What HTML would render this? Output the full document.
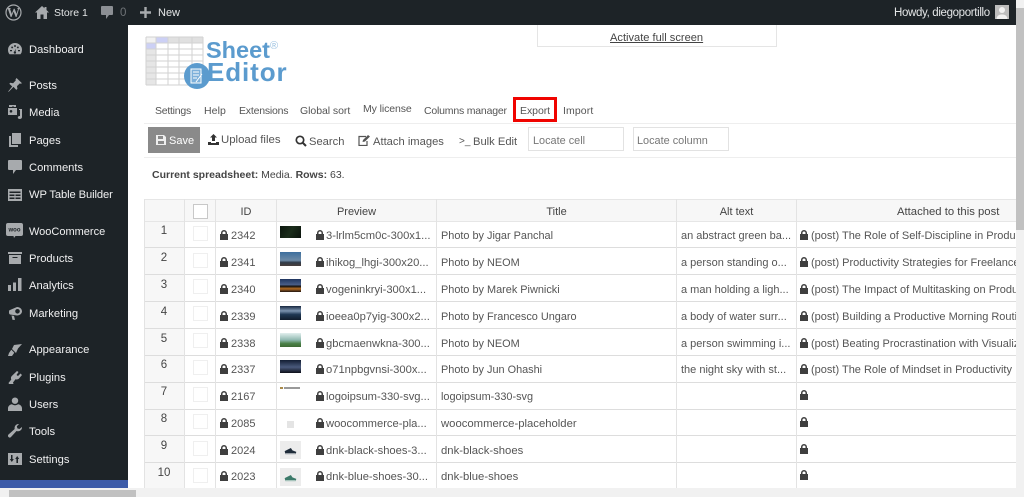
<!DOCTYPE html>
<html lang="en">
<head>
<meta charset="utf-8">
<title>Sheet Editor</title>
<style>
html,body{margin:0;padding:0;width:1024px;height:497px;overflow:hidden;background:#fff;font-family:"Liberation Sans",sans-serif;}
div,span,a,svg{position:absolute;}
.t{white-space:nowrap;line-height:14px;font-size:11px;color:#555;}
.sb{color:#f0f0f1;font-size:11.2px;left:29px;white-space:nowrap;line-height:14px;margin-top:1px;}
.si{left:8px;width:14px;height:14px;fill:#a7aaad;}
.m{font-size:10.5px;letter-spacing:-.15px;color:#555;white-space:nowrap;line-height:14px;top:104px;}
.tb{font-size:11.2px;color:#555;white-space:nowrap;line-height:14px;top:135px;}
.h{background:#e6e6e6;}
.v{background:#e3e3e3;top:199px;width:1px;height:289px;}
.th{font-size:11px;color:#444;text-align:center;line-height:14px;top:205px;}
.n{left:144px;width:40px;text-align:center;font-size:11.5px;color:#444;line-height:14px;margin-top:1px;}
.cb{left:193px;width:13px;height:13px;border:1px solid #efefef;background:#fff;}
.id{left:231px;font-size:11px;color:#555;line-height:14px;margin-top:1px;}
.p{left:326px;font-size:11.2px;color:#555;line-height:14px;white-space:nowrap;margin-top:1px;}
.ti{left:441px;font-size:10.9px;color:#555;line-height:14px;white-space:nowrap;margin-top:1px;}
.al{left:681px;font-size:11px;color:#555;line-height:14px;white-space:nowrap;margin-top:1px;}
.po{left:811px;width:205px;overflow:hidden;font-size:11px;color:#555;line-height:14px;white-space:nowrap;margin-top:1px;}
.l{width:8px;height:10px;fill:#3f3f3f;}
.th2{left:280px;width:21px;height:12px;}
</style>
</head>
<body>
<!-- admin bar -->
<div style="left:0;top:0;width:1016px;height:25px;background:#1d2327"></div>
<svg style="left:5px;top:4px;width:17px;height:17px" viewBox="0 0 20 20"><circle cx="10" cy="10" r="8.800" fill="none" stroke="#a7aaad" stroke-width="1.400"/><text x="10" y="15.500" font-family="Liberation Serif,serif" font-size="15.500" font-weight="bold" fill="#a7aaad" text-anchor="middle">W</text></svg>
<svg style="left:35px;top:6px;width:14px;height:13px" viewBox="0 0 14 13"><path d="M7 0L0 6.500h2V13h3.500V8.500h3V13H12V6.500h2L11.500 4V1h-2v1.200z" fill="#a7aaad"/></svg>
<span class="t" style="left:54px;top:6px;color:#e4e6e7;font-size:10.5px">Store 1</span>
<svg style="left:101px;top:6px;width:12px;height:14px" viewBox="0 0 12 14"><path d="M1 0h10a1 1 0 0 1 1 1v7a1 1 0 0 1-1 1H8l-3 4V9H1a1 1 0 0 1-1-1V1a1 1 0 0 1 1-1z" fill="#8c8f94"/></svg>
<span class="t" style="left:120px;top:6px;color:#6f7377;font-size:11.500px">0</span>
<svg style="left:140px;top:7px;width:11px;height:11px" viewBox="0 0 11 11"><path d="M4.300 0h2.400v4.300H11v2.400H6.700V11H4.300V6.700H0V4.300h4.300z" fill="#a7aaad"/></svg>
<span class="t" style="left:158px;top:6px;color:#e4e6e7;font-size:11px">New</span>
<span class="t" style="left:894px;top:6px;color:#e4e6e7;font-size:11.500px;letter-spacing:-.03em">Howdy, diegoportillo</span>
<div style="left:995px;top:5px;width:14px;height:14px;background:#bdbdbd"></div>
<svg style="left:995px;top:5px;width:14px;height:14px" viewBox="0 0 14 14"><circle cx="7" cy="5" r="3" fill="#f2f2f2"/><path d="M1.500 14c.5-3.500 2.500-4.500 5.500-4.500s5 1 5.500 4.500z" fill="#f2f2f2"/></svg>

<!-- sidebar -->
<div style="left:0;top:25px;width:128px;height:455px;background:#1d2327"></div>
<div style="left:0;top:480px;width:128px;height:8px;background:#3c5ba8"></div>

<svg class="si" style="top:42px" viewBox="0 0 14 14"><path d="M7 1a7 7 0 0 0-7 7c0 1.700.6 3.200 1.500 4.300h11A7 7 0 0 0 14 8a7 7 0 0 0-7-7zM6.300 3h1.400v2H6.300zM3 5l1.400-.6.800 1.500-1.300.6zm8 0l-.9 1.500-1.300-.6.800-1.500zM7.800 6.500L7.500 9.500a1.200 1.200 0 1 1-1-.1zM2 8h2v1.300H2zm8 0h2v1.300h-2z"/></svg>
<span class="sb" style="top:42px">Dashboard</span>
<svg class="si" style="top:78px" viewBox="0 0 14 14"><path d="M8.500 0l5.500 5.200-1.400.6-.8-.4-2.800 2.700.4 2.800-1.100 1-2.800-3L1 13.500l-1 .5.600-1L4.200 8.500 1.300 5.800l1-1 2.800.4L7.800 2.400l-.3-.9z"/></svg>
<span class="sb" style="top:78px">Posts</span>
<svg class="si" style="top:105px" viewBox="0 0 14 14"><path d="M1 0h7v2h-2L5 1 4 2H1zM0 3h9v7H0zm3 2a1.300 1.300 0 1 0 0 2.600A1.300 1.300 0 0 0 3 5zm8-1h3v8c0 1.200-1 2-2.200 2s-2-.6-2-1.500.8-1.500 2.200-1.500V5h-1z"/></svg>
<span class="sb" style="top:105px">Media</span>
<svg class="si" style="top:133px" viewBox="0 0 14 14"><path d="M4 0h9v11H4zM1 3h2v9h7v2H1z"/></svg>
<span class="sb" style="top:133px">Pages</span>
<svg class="si" style="top:160px" viewBox="0 0 14 14"><path d="M1 0h12a1 1 0 0 1 1 1v8a1 1 0 0 1-1 1H8l-3 4v-4H1a1 1 0 0 1-1-1V1a1 1 0 0 1 1-1z"/></svg>
<span class="sb" style="top:160px">Comments</span>
<svg class="si" style="top:188px" viewBox="0 0 14 14"><path d="M0 1h14v12H0zm1.500 2.500v1.500h11V3.500zm0 3V8h5V6.500zm6 0V8h5V6.500zm-6 3V11h5V9.500zm6 0V11h5V9.500z" fill-rule="evenodd"/></svg>
<span class="sb" style="top:187px;letter-spacing:-.1px">WP Table Builder</span>
<svg style="left:6px;top:222px;width:17px;height:17px" viewBox="0 0 17 17"><path d="M2 1h13a2 2 0 0 1 2 2v9a2 2 0 0 1-2 2H9.500L8 16l-.5-2H2a2 2 0 0 1-2-2V3a2 2 0 0 1 2-2z" fill="#a7aaad"/><text x="8.500" y="9.500" font-family="Liberation Sans,sans-serif" font-size="6" font-weight="bold" fill="#1d2327" text-anchor="middle">woo</text></svg>
<span class="sb" style="top:224px;font-size:11px">WooCommerce</span>
<svg class="si" style="top:251px" viewBox="0 0 14 14"><path d="M0 1h14v2H0zm1 3h12v9H1zm3.500 2v1h5V6z" fill-rule="evenodd"/></svg>
<span class="sb" style="top:251px">Products</span>
<svg class="si" style="top:278px" viewBox="0 0 14 14"><path d="M0 7h3v6H0zM5 4.500h3V13H5zM10 0h3.500v13H10z"/></svg>
<span class="sb" style="top:278px">Analytics</span>
<svg class="si" style="top:306px" viewBox="0 0 14 14"><path d="M9 1c2.800 0 5 2 5 4.300S11.800 9.500 9 9.500L2 8.500A2 2 0 0 1 1 7V5.500c0-.8.400-1.400 1-1.500zM9.500 3a2.300 2.300 0 1 0 0 4.600 2.300 2.300 0 0 0 0-4.600zM3.500 9.500l2.500.4 1 4H4.500z"/></svg>
<span class="sb" style="top:306px">Marketing</span>
<svg class="si" style="top:342px" viewBox="0 0 14 14"><path d="M6 3l8-1-4 4.500L8 11 4 7zM3.300 7.700l3 3L4 14H0l1-3z"/></svg>
<span class="sb" style="top:342px">Appearance</span>
<svg class="si" style="top:370px" viewBox="0 0 14 14"><path d="M9 1l1.500 1L8.500 5l1.500 1 2.500-2.500L14 5l-3 3.500c-1 1-2.500 1.200-3.500.8L5 12.500 5.500 14H1l-.5-1 2.800-3.500c-.6-1-.5-2.500.5-3.500z"/></svg>
<span class="sb" style="top:370px">Plugins</span>
<svg class="si" style="top:397px" viewBox="0 0 14 14"><circle cx="7" cy="3.700" r="3.200"/><path d="M0 14v-2.500c0-2.500 2-4 4-4.200C5 8 6 8.300 7 8.300s2-.3 3-1c2 .2 4 1.700 4 4.200V14z"/></svg>
<span class="sb" style="top:397px">Users</span>
<svg class="si" style="top:424px" viewBox="0 0 14 14"><path d="M14 3a4 4 0 0 1-5.500 4L3 13a1.700 1.700 0 0 1-2.500-2.500L6.700 5A4 4 0 0 1 11 0L8.800 2.400l.6 2 2 .6z"/></svg>
<span class="sb" style="top:424px">Tools</span>
<svg class="si" style="top:452px" viewBox="0 0 14 14"><path d="M0 1h14v12H0zm3 2v4H1.800l2 3 2-3H4.500V3zm7 8V7h1.200l-2-3-2 3h1.200v4z" fill-rule="evenodd"/></svg>
<span class="sb" style="top:452px">Settings</span>

<!-- logo -->
<svg style="left:145px;top:35px;width:145px;height:65px" viewBox="0 0 145 65">
<rect x="1" y="2" width="57" height="48" fill="#fff"/>
<rect x="1" y="2" width="10" height="48" fill="#e6e6e6"/>
<rect x="1" y="2" width="57" height="6" fill="#e0e0e0"/>
<rect x="1" y="2" width="10" height="6" fill="#f2f2f2"/>
<rect x="11" y="2" width="12" height="6" fill="#ccd0f5"/>
<rect x="1" y="8" width="10" height="6" fill="#ccd0f5"/>
<path d="M1 2v48M11 2v48M23 2v48M34 2v48M47 2v48M58 2v48M1 2h57M1 8h57M1 14h57M1 20h57M1 26h57M1 32h57M1 38h57M1 44h57M1 50h57" stroke="#d2d2d2" stroke-width="1" fill="none"/>
<text x="61" y="23" font-family="Liberation Sans,sans-serif" font-size="23.500" font-weight="bold" fill="#5b9bce">Sheet</text>
<text x="62" y="46" font-family="Liberation Sans,sans-serif" font-size="26" font-weight="bold" letter-spacing=".9" fill="#5b9bce">Editor</text>
<text x="125" y="14" font-family="Liberation Sans,sans-serif" font-size="11" fill="#9cc2e2">®</text>
<circle cx="52" cy="41" r="13" fill="#5b9bce"/>
<path d="M46 34h10v14H46z" fill="#7db0da" stroke="#fff" stroke-width="1"/>
<path d="M48 37h6M48 40h6M48 43h4M51 47l6-8" stroke="#fff" stroke-width="1" fill="none"/>
</svg>

<!-- full screen box -->
<div style="left:537px;top:25px;width:238px;height:21px;border:1px solid #e5e5e5;border-top:0"></div>
<a class="t" style="left:610px;top:31px;color:#444;text-decoration:underline;font-size:11.100px">Activate full screen</a>

<!-- menu -->
<span class="m" style="left:155px;letter-spacing:-.25px">Settings</span>
<span class="m" style="left:204px;letter-spacing:.1px">Help</span>
<span class="m" style="left:239px;letter-spacing:-.2px">Extensions</span>
<span class="m" style="left:300px;letter-spacing:-.05px">Global sort</span>
<span class="m" style="left:363px;top:102px;letter-spacing:-.1px">My license</span>
<span class="m" style="left:424px;letter-spacing:-.2px">Columns manager</span>
<span class="m" style="left:520px;letter-spacing:-.05px">Export</span>
<span class="m" style="left:563px;letter-spacing:.1px">Import</span>
<div style="left:513px;top:97px;width:38px;height:19px;border:3px solid #f00400"></div>
<div style="left:144px;top:123px;width:872px;height:1px;background:#eee"></div>

<!-- toolbar -->
<div style="left:148px;top:127px;width:52px;height:26px;background:#8a8a8a"></div>
<svg style="left:156px;top:135px;width:10px;height:10px" viewBox="0 0 10 10"><path d="M0 0h8l2 2v8H0zm2 1v3h5V1zm0 5v3h6V6z" fill="#eee" fill-rule="evenodd"/></svg>
<span class="tb" style="left:169px;color:#fff;top:134px;font-size:11px">Save</span>
<svg style="left:208px;top:134px;width:11px;height:11px" viewBox="0 0 11 11"><path d="M5.500 0L9 3.500H7V7H4V3.500H2zM0 8h3v1h5V8h3v3H0z" fill="#333"/></svg>
<span class="tb" style="left:221px;top:133px;font-size:11.400px">Upload files</span>
<svg style="left:295px;top:135px;width:12px;height:12px" viewBox="0 0 12 12"><circle cx="5" cy="5" r="3.700" fill="none" stroke="#333" stroke-width="1.700"/><path d="M8 8l3 3" stroke="#333" stroke-width="2"/></svg>
<span class="tb" style="left:309px">Search</span>
<svg style="left:358px;top:135px;width:12px;height:11px" viewBox="0 0 12 11"><path d="M8 1.500H1v9h8V6" fill="none" stroke="#555" stroke-width="1.200"/><path d="M4.500 7l.5-2L10 0l2 1.500-5 5z" fill="#555"/></svg>
<span class="tb" style="left:373px">Attach images</span>
<span class="tb" style="left:459px;font-size:10px">&gt;_</span>
<span class="tb" style="left:473px">Bulk Edit</span>
<div style="left:528px;top:127px;width:94px;height:22px;border:1px solid #e2e2e2"></div>
<span class="tb" style="left:533px;color:#777;top:134px;font-size:10.900px">Locate cell</span>
<div style="left:633px;top:127px;width:94px;height:22px;border:1px solid #e2e2e2"></div>
<span class="tb" style="left:637px;color:#777;top:134px;font-size:10.900px">Locate column</span>
<div style="left:144px;top:157px;width:872px;height:1px;background:#eee"></div>

<span class="t" style="left:152px;top:168px;color:#444;font-size:10.500px"><b>Current spreadsheet:</b> Media. <b>Rows:</b> 63.</span>

<!-- table -->
<div style="left:144px;top:199px;width:872px;height:22px;background:#f7f7f7"></div>
<div style="left:144px;top:199px;width:40px;height:289px;background:#f7f7f7"></div>
<div class="h" style="left:144px;top:199px;width:872px;height:1px"></div>
<div class="h" style="left:144px;top:221px;width:872px;height:1px"></div>
<div class="h" style="left:144px;top:247px;width:872px;height:1px;background:#ddd"></div>
<div class="h" style="left:144px;top:274px;width:872px;height:1px;background:#ddd"></div>
<div class="h" style="left:144px;top:301px;width:872px;height:1px;background:#ddd"></div>
<div class="h" style="left:144px;top:328px;width:872px;height:1px;background:#ddd"></div>
<div class="h" style="left:144px;top:355px;width:872px;height:1px;background:#ddd"></div>
<div class="h" style="left:144px;top:382px;width:872px;height:1px;background:#ddd"></div>
<div class="h" style="left:144px;top:409px;width:872px;height:1px;background:#ddd"></div>
<div class="h" style="left:144px;top:435px;width:872px;height:1px;background:#ddd"></div>
<div class="h" style="left:144px;top:462px;width:872px;height:1px;background:#ddd"></div>
<div class="v" style="left:144px"></div>
<div class="v" style="left:184px"></div>
<div class="v" style="left:215px"></div>
<div class="v" style="left:276px"></div>
<div class="v" style="left:436px"></div>
<div class="v" style="left:676px"></div>
<div class="v" style="left:796px"></div>

<div class="cb" style="top:204px;border-color:#c8c8c8"></div>
<div class="th" style="left:216px;width:60px">ID</div>
<div class="th" style="left:277px;width:159px">Preview</div>
<div class="th" style="left:437px;width:239px">Title</div>
<div class="th" style="left:677px;width:119px">Alt text</div>
<div class="th" style="left:897px;width:105px;white-space:nowrap;text-align:left;font-size:11.300px">Attached to this post</div>

<!-- row 1 -->
<div class="n" style="top:223px">1</div><div class="cb" style="top:226px"></div>
<svg class="l" style="left:220px;top:230px" viewBox="0 0 8 10"><path d="M1 4V3a3 3 0 0 1 6 0v1h1v6H0V4zm1.500 0h3V3a1.500 1.500 0 0 0-3 0z" fill-rule="evenodd"/></svg><div class="id" style="top:228px">2342</div>
<div class="th2" style="top:226px;background:linear-gradient(120deg,#0b160e,#1a2c1a 50%,#0a120c)"></div>
<svg class="l" style="left:316px;top:230px" viewBox="0 0 8 10"><path d="M1 4V3a3 3 0 0 1 6 0v1h1v6H0V4zm1.500 0h3V3a1.500 1.500 0 0 0-3 0z" fill-rule="evenodd"/></svg><div class="p" style="top:228px">3-lrlm5cm0c-300x1...</div>
<div class="ti" style="top:228px">Photo by Jigar Panchal</div>
<div class="al" style="top:228px">an abstract green ba...</div>
<svg class="l" style="left:800px;top:230px" viewBox="0 0 8 10"><path d="M1 4V3a3 3 0 0 1 6 0v1h1v6H0V4zm1.500 0h3V3a1.500 1.500 0 0 0-3 0z" fill-rule="evenodd"/></svg><div class="po" style="top:228px">(post) The Role of Self-Discipline in Productivity</div>

<!-- row 2 -->
<div class="n" style="top:250px">2</div><div class="cb" style="top:253px"></div>
<svg class="l" style="left:220px;top:257px" viewBox="0 0 8 10"><path d="M1 4V3a3 3 0 0 1 6 0v1h1v6H0V4zm1.500 0h3V3a1.500 1.500 0 0 0-3 0z" fill-rule="evenodd"/></svg><div class="id" style="top:255px">2341</div>
<div class="th2" style="top:252px;height:14px;background:linear-gradient(#3d6f9e,#6d8aa6 60%,#2f3a48 75%,#4a3f3c)"></div>
<svg class="l" style="left:316px;top:257px" viewBox="0 0 8 10"><path d="M1 4V3a3 3 0 0 1 6 0v1h1v6H0V4zm1.500 0h3V3a1.500 1.500 0 0 0-3 0z" fill-rule="evenodd"/></svg><div class="p" style="top:255px">ihikog_lhgi-300x20...</div>
<div class="ti" style="top:255px">Photo by NEOM</div>
<div class="al" style="top:255px">a person standing o...</div>
<svg class="l" style="left:800px;top:257px" viewBox="0 0 8 10"><path d="M1 4V3a3 3 0 0 1 6 0v1h1v6H0V4zm1.500 0h3V3a1.500 1.500 0 0 0-3 0z" fill-rule="evenodd"/></svg><div class="po" style="top:255px">(post) Productivity Strategies for Freelancers</div>

<!-- row 3 -->
<div class="n" style="top:277px">3</div><div class="cb" style="top:279px"></div>
<svg class="l" style="left:220px;top:284px" viewBox="0 0 8 10"><path d="M1 4V3a3 3 0 0 1 6 0v1h1v6H0V4zm1.500 0h3V3a1.500 1.500 0 0 0-3 0z" fill-rule="evenodd"/></svg><div class="id" style="top:282px">2340</div>
<div class="th2" style="top:279px;height:13px;background:linear-gradient(#1f3560,#4a5f88 45%,#101010 55%,#b06a22 75%,#201510)"></div>
<svg class="l" style="left:316px;top:284px" viewBox="0 0 8 10"><path d="M1 4V3a3 3 0 0 1 6 0v1h1v6H0V4zm1.500 0h3V3a1.500 1.500 0 0 0-3 0z" fill-rule="evenodd"/></svg><div class="p" style="top:282px">vogeninkryi-300x1...</div>
<div class="ti" style="top:282px">Photo by Marek Piwnicki</div>
<div class="al" style="top:282px">a man holding a ligh...</div>
<svg class="l" style="left:800px;top:284px" viewBox="0 0 8 10"><path d="M1 4V3a3 3 0 0 1 6 0v1h1v6H0V4zm1.500 0h3V3a1.500 1.500 0 0 0-3 0z" fill-rule="evenodd"/></svg><div class="po" style="top:282px">(post) The Impact of Multitasking on Productivity</div>

<!-- row 4 -->
<div class="n" style="top:304px">4</div><div class="cb" style="top:306px"></div>
<svg class="l" style="left:220px;top:311px" viewBox="0 0 8 10"><path d="M1 4V3a3 3 0 0 1 6 0v1h1v6H0V4zm1.500 0h3V3a1.500 1.500 0 0 0-3 0z" fill-rule="evenodd"/></svg><div class="id" style="top:309px">2339</div>
<div class="th2" style="top:306px;height:14px;background:linear-gradient(#16263e,#7b93b0 35%,#1f3754 60%,#101c2c)"></div>
<svg class="l" style="left:316px;top:311px" viewBox="0 0 8 10"><path d="M1 4V3a3 3 0 0 1 6 0v1h1v6H0V4zm1.500 0h3V3a1.500 1.500 0 0 0-3 0z" fill-rule="evenodd"/></svg><div class="p" style="top:309px">ioeea0p7yig-300x2...</div>
<div class="ti" style="top:309px">Photo by Francesco Ungaro</div>
<div class="al" style="top:309px">a body of water surr...</div>
<svg class="l" style="left:800px;top:311px" viewBox="0 0 8 10"><path d="M1 4V3a3 3 0 0 1 6 0v1h1v6H0V4zm1.500 0h3V3a1.500 1.500 0 0 0-3 0z" fill-rule="evenodd"/></svg><div class="po" style="top:309px">(post) Building a Productive Morning Routine</div>

<!-- row 5 -->
<div class="n" style="top:331px">5</div><div class="cb" style="top:333px"></div>
<svg class="l" style="left:220px;top:338px" viewBox="0 0 8 10"><path d="M1 4V3a3 3 0 0 1 6 0v1h1v6H0V4zm1.500 0h3V3a1.500 1.500 0 0 0-3 0z" fill-rule="evenodd"/></svg><div class="id" style="top:336px">2338</div>
<div class="th2" style="top:333px;height:14px;background:linear-gradient(#e2efee,#8fb8b0 50%,#4a8048 75%,#3e6a34)"></div>
<svg class="l" style="left:316px;top:338px" viewBox="0 0 8 10"><path d="M1 4V3a3 3 0 0 1 6 0v1h1v6H0V4zm1.500 0h3V3a1.500 1.500 0 0 0-3 0z" fill-rule="evenodd"/></svg><div class="p" style="top:336px">gbcmaenwkna-300...</div>
<div class="ti" style="top:336px">Photo by NEOM</div>
<div class="al" style="top:336px">a person swimming i...</div>
<svg class="l" style="left:800px;top:338px" viewBox="0 0 8 10"><path d="M1 4V3a3 3 0 0 1 6 0v1h1v6H0V4zm1.500 0h3V3a1.500 1.500 0 0 0-3 0z" fill-rule="evenodd"/></svg><div class="po" style="top:336px">(post) Beating Procrastination with Visualization</div>

<!-- row 6 -->
<div class="n" style="top:357px">6</div><div class="cb" style="top:360px"></div>
<svg class="l" style="left:220px;top:364px" viewBox="0 0 8 10"><path d="M1 4V3a3 3 0 0 1 6 0v1h1v6H0V4zm1.500 0h3V3a1.500 1.500 0 0 0-3 0z" fill-rule="evenodd"/></svg><div class="id" style="top:362px">2337</div>
<div class="th2" style="top:360px;height:13px;background:linear-gradient(#121d33,#4a5a7c 55%,#0c0f18)"></div>
<svg class="l" style="left:316px;top:364px" viewBox="0 0 8 10"><path d="M1 4V3a3 3 0 0 1 6 0v1h1v6H0V4zm1.500 0h3V3a1.500 1.500 0 0 0-3 0z" fill-rule="evenodd"/></svg><div class="p" style="top:362px">o71npbgvnsi-300x...</div>
<div class="ti" style="top:362px">Photo by Jun Ohashi</div>
<div class="al" style="top:362px">the night sky with st...</div>
<svg class="l" style="left:800px;top:364px" viewBox="0 0 8 10"><path d="M1 4V3a3 3 0 0 1 6 0v1h1v6H0V4zm1.500 0h3V3a1.500 1.500 0 0 0-3 0z" fill-rule="evenodd"/></svg><div class="po" style="top:362px">(post) The Role of Mindset in Productivity</div>

<!-- row 7 -->
<div class="n" style="top:384px">7</div><div class="cb" style="top:387px"></div>
<svg class="l" style="left:220px;top:391px" viewBox="0 0 8 10"><path d="M1 4V3a3 3 0 0 1 6 0v1h1v6H0V4zm1.500 0h3V3a1.500 1.500 0 0 0-3 0z" fill-rule="evenodd"/></svg><div class="id" style="top:389px">2167</div>
<div style="left:280px;top:387px;width:3px;height:2px;background:#a98a4a"></div><div style="left:284px;top:387px;width:16px;height:2px;background:#999"></div>
<svg class="l" style="left:316px;top:391px" viewBox="0 0 8 10"><path d="M1 4V3a3 3 0 0 1 6 0v1h1v6H0V4zm1.500 0h3V3a1.500 1.500 0 0 0-3 0z" fill-rule="evenodd"/></svg><div class="p" style="top:389px">logoipsum-330-svg...</div>
<div class="ti" style="top:389px">logoipsum-330-svg</div>
<svg class="l" style="left:800px;top:390px" viewBox="0 0 8 10"><path d="M1 4V3a3 3 0 0 1 6 0v1h1v6H0V4zm1.500 0h3V3a1.500 1.500 0 0 0-3 0z" fill-rule="evenodd"/></svg>

<!-- row 8 -->
<div class="n" style="top:411px">8</div><div class="cb" style="top:414px"></div>
<svg class="l" style="left:220px;top:418px" viewBox="0 0 8 10"><path d="M1 4V3a3 3 0 0 1 6 0v1h1v6H0V4zm1.500 0h3V3a1.500 1.500 0 0 0-3 0z" fill-rule="evenodd"/></svg><div class="id" style="top:416px">2085</div>
<div style="left:287px;top:421px;width:7px;height:7px;background:#e4e4e4"></div>
<svg class="l" style="left:316px;top:418px" viewBox="0 0 8 10"><path d="M1 4V3a3 3 0 0 1 6 0v1h1v6H0V4zm1.500 0h3V3a1.500 1.500 0 0 0-3 0z" fill-rule="evenodd"/></svg><div class="p" style="top:416px">woocommerce-pla...</div>
<div class="ti" style="top:416px;font-size:11.300px">woocommerce-placeholder</div>
<svg class="l" style="left:800px;top:417px" viewBox="0 0 8 10"><path d="M1 4V3a3 3 0 0 1 6 0v1h1v6H0V4zm1.500 0h3V3a1.500 1.500 0 0 0-3 0z" fill-rule="evenodd"/></svg>

<!-- row 9 -->
<div class="n" style="top:438px">9</div><div class="cb" style="top:441px"></div>
<svg class="l" style="left:220px;top:445px" viewBox="0 0 8 10"><path d="M1 4V3a3 3 0 0 1 6 0v1h1v6H0V4zm1.500 0h3V3a1.500 1.500 0 0 0-3 0z" fill-rule="evenodd"/></svg><div class="id" style="top:443px">2024</div>
<div style="left:280px;top:441px;width:21px;height:18px;background:#ececec"></div>
<svg style="left:283px;top:448px;width:15px;height:7px" viewBox="0 0 17 9"><path d="M1 4l8-4 2 3 5 2-1 3H2z" fill="#1f2c3a"/><path d="M2 7h13v1H2z" fill="#fff"/></svg>
<svg class="l" style="left:316px;top:445px" viewBox="0 0 8 10"><path d="M1 4V3a3 3 0 0 1 6 0v1h1v6H0V4zm1.500 0h3V3a1.500 1.500 0 0 0-3 0z" fill-rule="evenodd"/></svg><div class="p" style="top:443px">dnk-black-shoes-3...</div>
<div class="ti" style="top:443px;font-size:11.300px">dnk-black-shoes</div>
<svg class="l" style="left:800px;top:444px" viewBox="0 0 8 10"><path d="M1 4V3a3 3 0 0 1 6 0v1h1v6H0V4zm1.500 0h3V3a1.500 1.500 0 0 0-3 0z" fill-rule="evenodd"/></svg>

<!-- row 10 -->
<div class="n" style="top:465px">10</div><div class="cb" style="top:468px"></div>
<svg class="l" style="left:220px;top:471px" viewBox="0 0 8 10"><path d="M1 4V3a3 3 0 0 1 6 0v1h1v6H0V4zm1.500 0h3V3a1.500 1.500 0 0 0-3 0z" fill-rule="evenodd"/></svg><div class="id" style="top:469px">2023</div>
<div style="left:280px;top:468px;width:21px;height:18px;background:#ececec"></div>
<svg style="left:283px;top:475px;width:15px;height:7px" viewBox="0 0 17 9"><path d="M1 4l8-4 2 3 5 2-1 3H2z" fill="#3c7a6a"/><path d="M2 7h13v1H2z" fill="#fff"/></svg>
<svg class="l" style="left:316px;top:471px" viewBox="0 0 8 10"><path d="M1 4V3a3 3 0 0 1 6 0v1h1v6H0V4zm1.500 0h3V3a1.500 1.500 0 0 0-3 0z" fill-rule="evenodd"/></svg><div class="p" style="top:469px">dnk-blue-shoes-30...</div>
<div class="ti" style="top:469px;font-size:11.300px">dnk-blue-shoes</div>
<svg class="l" style="left:800px;top:470px" viewBox="0 0 8 10"><path d="M1 4V3a3 3 0 0 1 6 0v1h1v6H0V4zm1.500 0h3V3a1.500 1.500 0 0 0-3 0z" fill-rule="evenodd"/></svg>

<!-- scrollbars -->
<div style="left:1016px;top:0;width:8px;height:497px;background:#f1f1f1"></div>
<div style="left:1016px;top:8px;width:8px;height:222px;background:#c1c1c1"></div>
<div style="left:0;top:488px;width:1016px;height:9px;background:#f1f1f1"></div>
<div style="left:9px;top:490px;width:127px;height:7px;background:#c1c1c1"></div>
</body>
</html>
